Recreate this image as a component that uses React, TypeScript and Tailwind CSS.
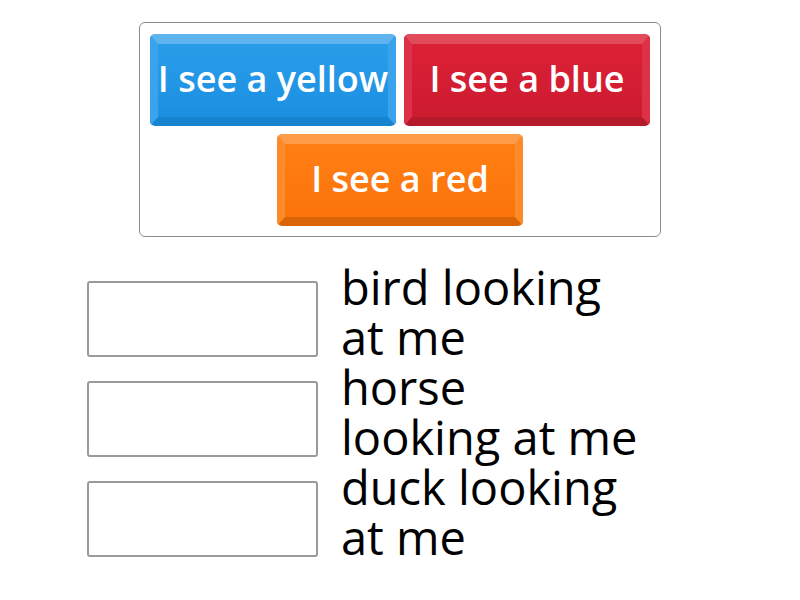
import React from "react";

const buttons = [
  {
    label: "I see a yellow",
    cls: "border-t-[#5db4ef] border-x-[#3aa3eb] border-b-[#1784d0] bg-gradient-to-b from-[#2a9de9] to-[#1b90e2]",
  },
  {
    label: "I see a blue",
    cls: "border-t-[#e24b5c] border-x-[#dc3146] border-b-[#b5192a] bg-gradient-to-b from-[#dc2036] to-[#cc1b2f]",
  },
  {
    label: "I see a red",
    cls: "border-t-[#ff9c49] border-x-[#ff8a29] border-b-[#dc6408] bg-gradient-to-b from-[#ff7f14] to-[#fb740b]",
  },
];

const items = [
  ["bird looking", "at me"],
  ["horse", "looking at me"],
  ["duck looking", "at me"],
];

function Tile({ label, cls }: { label: string; cls: string }) {
  return (
    <div
      className={`w-[246px] h-[92px] rounded-[5px] border-x-[8px] border-t-[10px] border-b-[9px] flex items-center justify-center ${cls}`}
    >
      <span className="text-white text-[36px] font-semibold whitespace-nowrap leading-none -mt-[4px]">
        {label}
      </span>
    </div>
  );
}

export default function App() {
  return (
    <div className="w-[800px] h-[600px] bg-white overflow-hidden font-['Open_Sans',sans-serif]">
      {/* Answer tiles */}
      <div className="pt-[22px] flex justify-center">
        <div className="w-[522px] border border-[#8a8a8a] rounded-[6px] px-[10px] pt-[11px] pb-[10px] flex flex-col items-center gap-[8px]">
          <div className="flex gap-[8px]">
            <Tile {...buttons[0]} />
            <Tile {...buttons[1]} />
          </div>
          <Tile {...buttons[2]} />
        </div>
      </div>

      {/* Sentences */}
      <div className="mt-[25px] pl-[87px] flex flex-col">
        {items.map((lines, i) => (
          <div key={i} className="h-[100px] flex items-start">
            <div className="mt-[19px] w-[231px] h-[76px] border-2 border-[#9a9a9a] rounded-[3px] shrink-0"></div>
            <div className="ml-[23px] text-[47px] leading-[50px] text-black">
              {lines.map((l, j) => (
                <div key={j} className="whitespace-nowrap">
                  {l}
                </div>
              ))}
            </div>
          </div>
        ))}
      </div>
    </div>
  );
}
